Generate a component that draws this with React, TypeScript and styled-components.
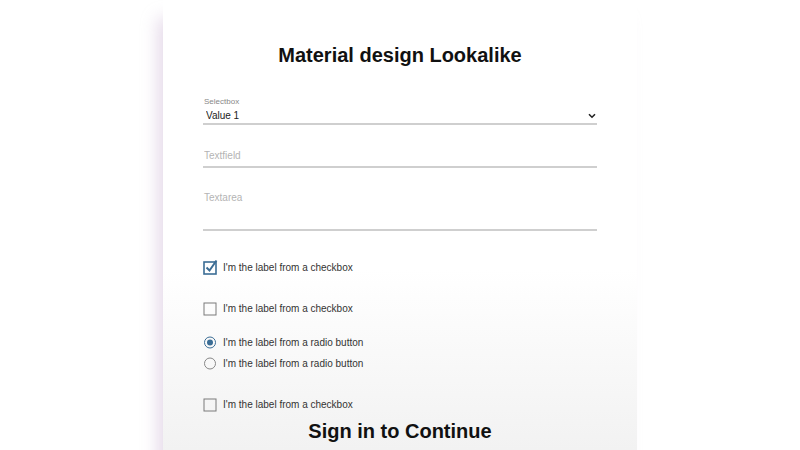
import React from "react";
import styled, { createGlobalStyle } from "styled-components";

const Global = createGlobalStyle`
  html, body { margin: 0; padding: 0; overflow: hidden; background: #fff; }
  body { font-family: "Liberation Sans", Arial, sans-serif; }
  * { box-sizing: border-box; }
`;

const Page = styled.div`
  width: 800px;
  height: 450px;
  display: flex;
  justify-content: center;
  overflow: hidden;
`;

const Card = styled.form`
  width: 474px;
  min-height: 520px;
  padding: 0 40px;
  display: flex;
  flex-direction: column;
  background: linear-gradient(to bottom, #ffffff 0px, #ffffff 270px, #f2f2f2 450px, #efefef 520px);
  box-shadow: -9px 14px 16px -4px rgba(190, 160, 200, 0.4);
`;

const Title = styled.h1`
  margin: 43px 0 0;
  font-size: 20px;
  line-height: 24px;
  font-weight: 700;
  text-align: center;
  color: #111;
`;

const Field = styled.div<{ $mt: number }>`
  margin-top: ${(p) => p.$mt}px;
  display: flex;
  flex-direction: column;
  position: relative;
`;

const SmallLabel = styled.label`
  font-size: 8px;
  line-height: 10px;
  height: 10px;
  color: #888;
  padding-left: 1px;
`;

const SelectWrap = styled.div`
  position: relative;
  height: 16px;
  border-bottom: 2px solid #cfcfcf;
  margin-top: 2px;
`;

const Select = styled.select`
  appearance: none;
  display: block;
  width: 100%;
  border: 0;
  margin: 0;
  background: transparent;
  font-family: inherit;
  font-size: 10px;
  line-height: 14px;
  height: 14px;
  padding: 0 0 0 3px;
  color: #222;
  outline: none;
`;

const Chevron = styled.svg`
  position: absolute;
  right: 1px;
  top: 4px;
  pointer-events: none;
`;

const Input = styled.input`
  border: 0;
  border-bottom: 2px solid #cfcfcf;
  background: transparent;
  font-family: inherit;
  font-size: 10px;
  line-height: 14px;
  height: 20px;
  padding: 0 0 4px 1px;
  outline: none;
  &::placeholder { color: #b4b4b4; }
`;

const TextArea = styled.textarea`
  border: 0;
  border-bottom: 2px solid #cfcfcf;
  background: transparent;
  font-family: inherit;
  font-size: 10px;
  line-height: 14px;
  height: 40px;
  resize: none;
  padding: 0 0 0 1px;
  outline: none;
  &::placeholder { color: #b4b4b4; }
`;

const Option = styled.label<{ $mt: number }>`
  margin-top: ${(p) => p.$mt}px;
  display: flex;
  align-items: center;
  gap: 5px;
  height: 16px;
  font-size: 10px;
  color: #333;
  cursor: pointer;
`;

const Icon = styled.svg`
  flex: none;
`;

const Bottom = styled.h2`
  margin: 7px 0 0;
  font-size: 20px;
  line-height: 24px;
  font-weight: 700;
  text-align: center;
  color: #111;
`;

const BLUE = "#3b6d95";

const CheckBox = ({ checked }: { checked?: boolean }) => (
  <Icon width="15" height="16" viewBox="0 0 15 16">
    {checked ? (
      <>
        <rect x="1" y="3" width="12" height="12" fill="none" stroke={BLUE} strokeWidth="1.6" />
        <path d="M3.5 8.5 L6.5 11.5 L13.5 1.5" fill="none" stroke={BLUE} strokeWidth="2" />
      </>
    ) : (
      <rect x="1" y="3" width="12" height="12" fill="none" stroke="#7a7a7a" strokeWidth="1" />
    )}
  </Icon>
);

const Radio = ({ checked }: { checked?: boolean }) => (
  <Icon width="15" height="16" viewBox="0 0 15 16">
    <circle cx="7" cy="8.5" r="5.5" fill="none" stroke={checked ? BLUE : "#888"} strokeWidth="1" />
    {checked && <circle cx="7" cy="8.5" r="3" fill={BLUE} />}
  </Icon>
);

export default function App() {
  return (
    <Page>
      <Global />
      <Card onSubmit={(e) => e.preventDefault()}>
        <Title>Material design Lookalike</Title>
        <Field $mt={30}>
          <SmallLabel>Selectbox</SmallLabel>
          <SelectWrap>
            <Select defaultValue="1">
              <option value="1">Value 1</option>
              <option value="2">Value 2</option>
            </Select>
            <Chevron width="8" height="6" viewBox="0 0 8 6">
              <path d="M1 1.2 L4 4.2 L7 1.2" fill="none" stroke="#222" strokeWidth="1.6" />
            </Chevron>
          </SelectWrap>
        </Field>
        <Field $mt={23}>
          <Input placeholder="Textfield" />
        </Field>
        <Field $mt={23}>
          <TextArea placeholder="Textarea" />
        </Field>
        <Option $mt={28}>
          <CheckBox checked />
          I'm the label from a checkbox
        </Option>
        <Option $mt={25}>
          <CheckBox />
          I'm the label from a checkbox
        </Option>
        <Option $mt={18}>
          <Radio checked />
          I'm the label from a radio button
        </Option>
        <Option $mt={5}>
          <Radio />
          I'm the label from a radio button
        </Option>
        <Option $mt={25}>
          <CheckBox />
          I'm the label from a checkbox
        </Option>
        <Bottom>Sign in to Continue</Bottom>
      </Card>
    </Page>
  );
}
